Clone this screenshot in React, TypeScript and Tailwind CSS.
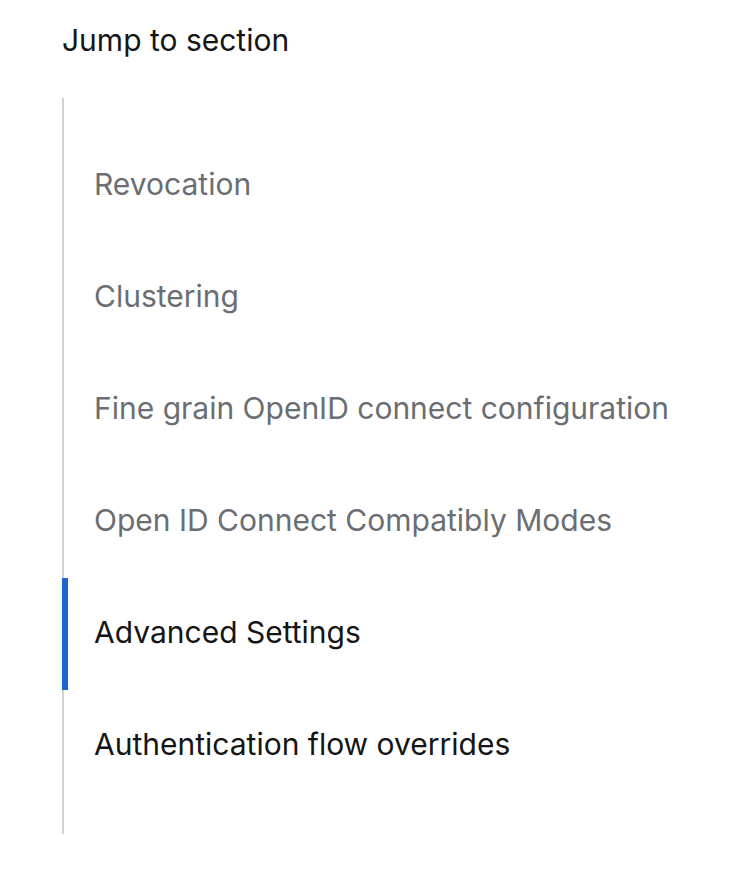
import React from 'react';

const sections = [
  { id: 'revocation', label: 'Revocation' },
  { id: 'clustering', label: 'Clustering' },
  { id: 'fine-grain', label: 'Fine grain OpenID connect configuration' },
  { id: 'compat', label: 'Open ID Connect Compatibly Modes' },
  { id: 'advanced', label: 'Advanced Settings', active: true },
  { id: 'auth-flow', label: 'Authentication flow overrides', current: true },
];

export default function App() {
  return (
    <div className="min-h-[896px] bg-white pl-[62px] pt-[18px] font-['Inter',sans-serif]">
      <h2 className="text-[30px] leading-[44px] text-[#151515]">Jump to section</h2>

      <ul className="mt-[36px] w-fit border-l-2 border-[#d2d2d2] py-[32px]">
        {sections.map((s) => (
          <li key={s.id} className="relative">
            {s.active && <span className="absolute -left-[2px] top-0 h-full w-[6px] bg-[#1f66cc]" />}
            <a
              href={`#${s.id}`}
              className={`flex h-[112px] items-center pb-[4px] pl-[30px] pr-4 text-[30px] ${
                s.active || s.current ? 'text-[#151515]' : 'text-[#6a6e73]'
              }`}
            >
              {s.label}
            </a>
          </li>
        ))}
      </ul>
    </div>
  );
}
